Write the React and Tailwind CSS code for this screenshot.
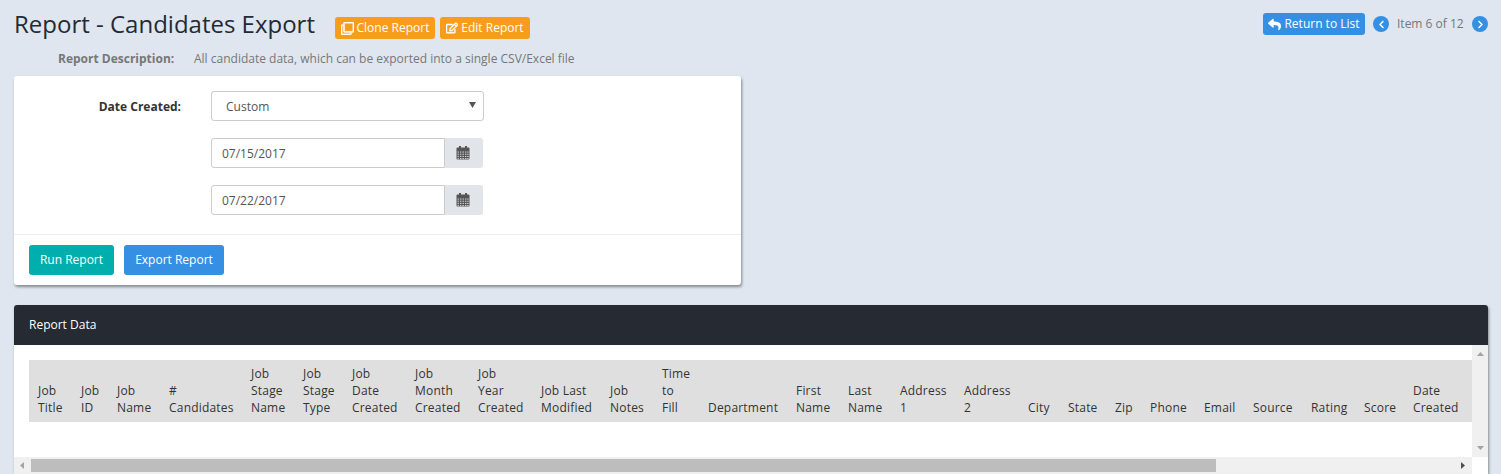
import React from "react";
import { FaRegClone, FaRegEdit, FaReply, FaChevronLeft, FaChevronRight } from "react-icons/fa";

const cols = [
  [43, ["Job", "Title"]],
  [36, ["Job", "ID"]],
  [52, ["Job", "Name"]],
  [82, ["#", "Candidates"]],
  [52, ["Job", "Stage", "Name"]],
  [49, ["Job", "Stage", "Type"]],
  [63, ["Job", "Date", "Created"]],
  [63, ["Job", "Month", "Created"]],
  [63, ["Job", "Year", "Created"]],
  [69, ["Job Last", "Modified"]],
  [52, ["Job", "Notes"]],
  [46, ["Time", "to", "Fill"]],
  [88, ["Department"]],
  [52, ["First", "Name"]],
  [52, ["Last", "Name"]],
  [64, ["Address", "1"]],
  [64, ["Address", "2"]],
  [40, ["City"]],
  [47, ["State"]],
  [35, ["Zip"]],
  [54, ["Phone"]],
  [49, ["Email"]],
  [58, ["Source"]],
  [53, ["Rating"]],
  [49, ["Score"]],
  [70, ["Date", "Created"]],
];

function Calendar() {
  return (
    <svg width="14" height="14" viewBox="0 0 14 14" aria-hidden="true">
      <rect x="0.5" y="1.5" width="13" height="12" rx="1" fill="#555" />
      <rect x="3" y="0" width="2" height="3" fill="#555" />
      <rect x="9" y="0" width="2" height="3" fill="#555" />
      <g fill="#c9ced6">
        {[5.5, 7.7, 9.9, 12].map((y) =>
          [1.5, 4, 6.5, 9, 11.2].map((x) => <rect key={`${x}-${y}`} x={x} y={y} width="1.4" height="1.1" />)
        )}
      </g>
    </svg>
  );
}

function Arrow({ points, w, h, fill }) {
  return (
    <svg width={w} height={h} viewBox={`0 0 ${w} ${h}`} aria-hidden="true" className="block shrink-0">
      <polygon points={points} fill={fill} />
    </svg>
  );
}

function DateInput({ value }) {
  return (
    <div className="flex w-[272px] h-[30px]">
      <div className="w-[234px] h-full border border-[#ccc] rounded-l-[3px] bg-white pl-[10px] pt-[2px] flex items-center text-[12px] text-[#555]">
        {value}
      </div>
      <div className="w-[38px] h-full bg-[#e1e5e9] rounded-r-[3px] flex items-center justify-center pr-[2px]">
        <Calendar />
      </div>
    </div>
  );
}

function Circle({ children }) {
  return (
    <span className="w-4 h-4 rounded-full bg-[#3590e3] text-white flex items-center justify-center text-[9px]">
      {children}
    </span>
  );
}

export default function App() {
  return (
    <div
      className="h-screen overflow-hidden bg-[#dfe6ef] pl-[14px] pr-[13px] text-[12px] text-[#333]"
      style={{ fontFamily: '"Open Sans", sans-serif' }}
    >
      <div className="flex items-start justify-between h-[76px]">
        <div>
          <div className="flex items-center pt-[9px] h-[39px]">
            <h1 className="text-[24px] leading-[30px] text-[#252a33] font-normal w-[321px] whitespace-nowrap">
              Report - Candidates Export
            </h1>
            <button className="w-[100px] h-[22px] mt-[8px] bg-[#f89c1c] rounded-[3px] text-white flex items-center justify-center gap-[3px]">
              <FaRegClone className="text-[13px] [stroke-width:16px]" /> Clone Report
            </button>
            <button className="w-[90px] h-[22px] mt-[8px] ml-[5px] bg-[#f89c1c] rounded-[3px] text-white flex items-center justify-center gap-[3px]">
              <FaRegEdit className="text-[12px] [stroke-width:24px]" /> Edit Report
            </button>
          </div>
          <div className="flex pl-[44px] pt-[11px] leading-[18px] text-[#777]">
            <span className="font-bold w-[136px]">Report Description:</span>
            <span>All candidate data, which can be exported into a single CSV/Excel file</span>
          </div>
        </div>
        <div className="flex items-center pt-[13px]">
          <button className="w-[102px] h-[22px] bg-[#3590e3] rounded-[3px] text-white flex items-center justify-center gap-[3px]">
            <FaReply className="text-[13px]" /> Return to List
          </button>
          <span className="ml-2"><Circle><FaChevronLeft /></Circle></span>
          <span className="ml-2 w-[75px] text-[#777]">Item 6 of 12</span>
          <Circle><FaChevronRight /></Circle>
        </div>
      </div>

      <div className="w-[727px] h-[209px] bg-white rounded-[3px] shadow-[1px_2px_3px_rgba(0,0,0,0.4)] flex flex-col">
        <div className="h-[158px] pt-[15px] flex">
          <div className="w-[167px] pt-[7px] text-right font-bold leading-[18px]">Date Created:</div>
          <div className="ml-[30px] flex flex-col gap-[17px]">
            <div className="w-[273px] h-[30px] border border-[#ccc] rounded-[3px] flex items-center justify-between pl-[14px] pr-[7px] text-[#555]">
              <span className="pt-[2px]">Custom</span>
              <span className="pb-[3px]">
                <Arrow w={7} h={6} points="0,0 7,0 3.5,6" fill="#555" />
              </span>
            </div>
            <DateInput value="07/15/2017" />
            <DateInput value="07/22/2017" />
          </div>
        </div>
        <div className="border-t border-[#eee] pt-[10px] pl-[15px] flex gap-[10px]">
          <button className="w-[85px] h-[30px] bg-[#00aead] rounded-[3px] text-white">Run Report</button>
          <button className="w-[100px] h-[30px] bg-[#3590e3] rounded-[3px] text-white">Export Report</button>
        </div>
      </div>

      <div className="mt-5 w-[1474px] bg-white rounded-[3px] shadow-[1px_2px_3px_rgba(0,0,0,0.4)]">
        <div className="h-10 bg-[#252a33] rounded-t-[3px] flex items-center pl-[15px] text-white">Report Data</div>
        <div className="flex h-[112px]">
          <div className="flex-1 min-w-0 overflow-hidden pt-[15px] pl-[15px]">
            <table className="border-collapse table-fixed" style={{ width: cols.reduce((s, c) => s + c[0], 0) }}>
              <thead>
                <tr className="bg-[#dfdfdf] h-[62px]">
                  {cols.map(([w, lines], i) => (
                    <th key={i} style={{ width: w }} className="align-bottom text-left font-normal pl-[9px] pb-[6px] leading-[17px] tracking-[0.2px] whitespace-nowrap">
                      {lines.map((l) => (
                        <div key={l}>{l}</div>
                      ))}
                    </th>
                  ))}
                </tr>
              </thead>
            </table>
          </div>
          <div className="w-4 bg-[#f0f0f0] flex flex-col items-center justify-between pt-[7px] pb-[7px]">
            <Arrow w={7} h={4} points="3.5,0 7,4 0,4" fill="#a3a3a3" />
            <Arrow w={7} h={4} points="0,0 7,0 3.5,4" fill="#a3a3a3" />
          </div>
        </div>
        <div className="h-[17px] flex">
          <div className="flex-1 bg-[#f0f0f0] flex items-center">
            <span className="ml-[6px] w-[11px]">
              <Arrow w={4} h={7} points="4,0 4,7 0,3.5" fill="#a3a3a3" />
            </span>
            <div className="w-[1185px] h-[13px] bg-[#bdbdbd]" />
            <span className="ml-auto mr-[7px]">
              <Arrow w={4} h={7} points="0,0 4,3.5 0,7" fill="#505050" />
            </span>
          </div>
          <div className="w-4 bg-white" />
        </div>
      </div>
    </div>
  );
}
